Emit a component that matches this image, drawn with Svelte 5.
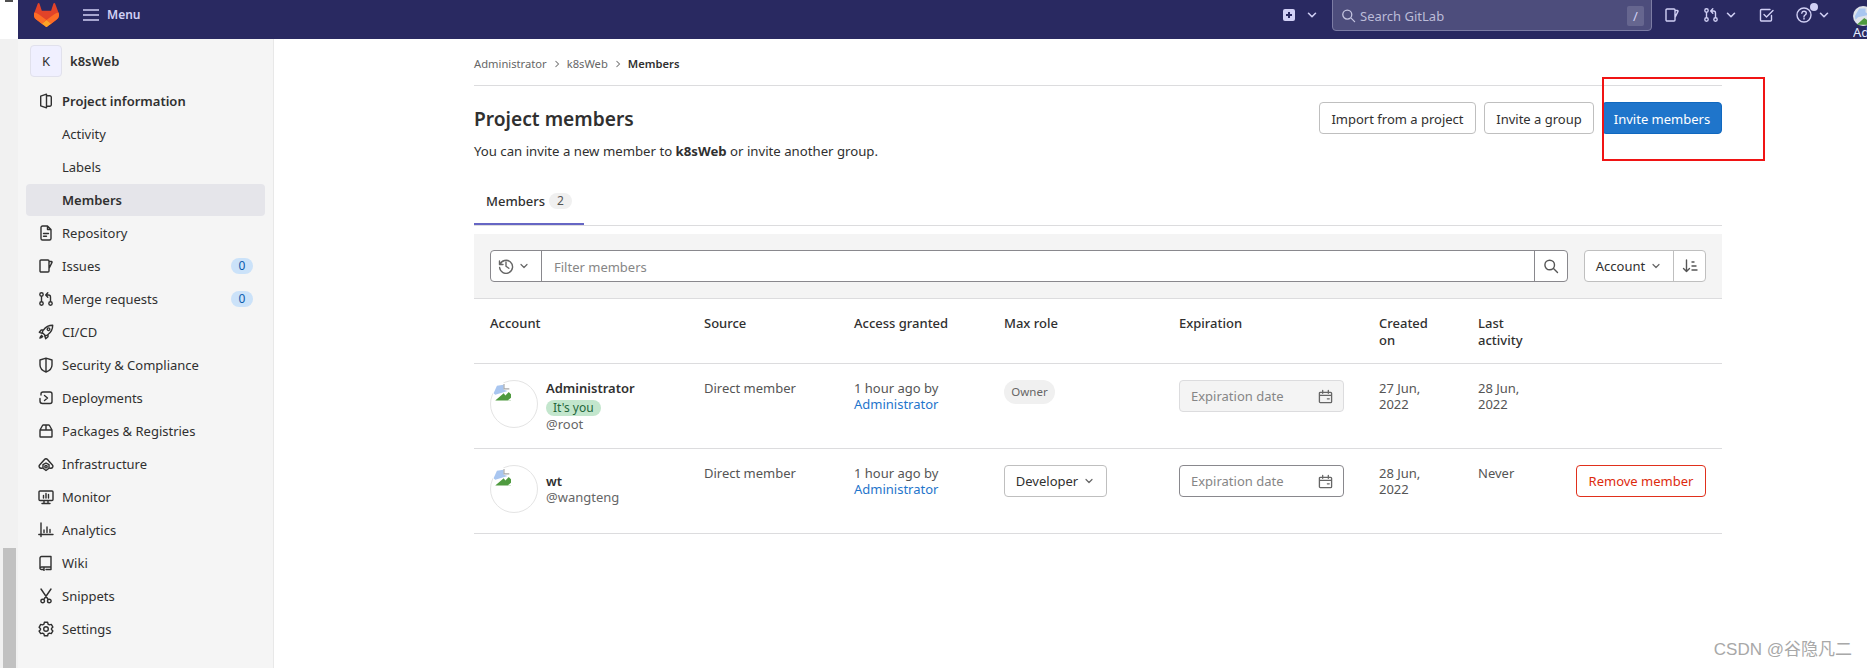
<script>
  const nav = [
    { icon: 'doc', label: 'Repository' },
    { icon: 'issues', label: 'Issues', count: 0 },
    { icon: 'mr', label: 'Merge requests', count: 0 },
    { icon: 'rocket', label: 'CI/CD' },
    { icon: 'shield', label: 'Security & Compliance' },
    { icon: 'deploy', label: 'Deployments' },
    { icon: 'package', label: 'Packages & Registries' },
    { icon: 'infra', label: 'Infrastructure' },
    { icon: 'monitor', label: 'Monitor' },
    { icon: 'analytics', label: 'Analytics' },
    { icon: 'book', label: 'Wiki' },
    { icon: 'snippet', label: 'Snippets' },
    { icon: 'gear', label: 'Settings' }
  ];
  const icons = {
    project: 'M2.7 3.2 8.5 1.2v13.6l-5.8-2zM8.5 2.7h3.3a1.5 1.5 0 0 1 1.5 1.5v7.6a1.5 1.5 0 0 1-1.5 1.5H8.5',
    doc: 'M3 2.5A1.5 1.5 0 0 1 4.5 1h5L13 4.5v9a1.5 1.5 0 0 1-1.5 1.5h-7A1.5 1.5 0 0 1 3 13.5zM9.5 1v3.5H13M5.5 8.5h5M5.5 11.2h3',
    issues: 'M3 2h7a1 1 0 0 1 1 1v10a1 1 0 0 1-1 1H3a1 1 0 0 1-1-1V3a1 1 0 0 1 1-1zM11 3.5h2.5a.6.6 0 0 1 .5.9L11 10.5',
    mr: 'M3.5 5.2v5.6M12.5 10.8V6a2 2 0 0 0-2-2H8M9.8 1.8 7.7 4l2.1 2.2M5.2 3.5a1.7 1.7 0 1 1-3.4 0 1.7 1.7 0 0 1 3.4 0zM5.2 12.5a1.7 1.7 0 1 1-3.4 0 1.7 1.7 0 0 1 3.4 0zM14.2 12.5a1.7 1.7 0 1 1-3.4 0 1.7 1.7 0 0 1 3.4 0z',
    rocket: 'M5.5 6C7.5 3.2 11 1.3 14.7 1.3 14.700 5 12.800 8.500 10 10.500c-.8.6-1.600 1-2.400 1.300L4.200 8.400c.3-.8.8-1.600 1.300-2.400zM5.500 6H3.200L1.300 8.300l2.900 1M10 10.500v2.300l-2.300 1.900-1-2.900M3.700 11.300c-.9.500-1.500 1.700-1.800 2.800 1.100-.3 2.300-.9 2.800-1.800M11.800 5.200a1.300 1.300 0 1 1-2.600 0 1.300 1.300 0 0 1 2.600 0z',
    shield: 'M8 1.200 14 3v5c0 3.300-2.700 5.800-6 7-3.300-1.200-6-3.700-6-7V3zM8 1.200V15',
    deploy: 'M3 5V4a2 2 0 0 1 2-2h7a2 2 0 0 1 2 2v7.500a2 2 0 0 1-2 2H4.500A2.500 2.500 0 0 1 2 11V8.500M6.500 5.500 9.500 8l-3 2.500',
    package: 'M2 7h12v6.500a.5.5 0 0 1-.5.500h-11a.5.5 0 0 1-.5-.500zM2 7l2.500-4.500a1 1 0 0 1 .9-.5h5.200a1 1 0 0 1 .9.5L14 7M8 2v5',
    infra: 'M4 12.300H3.200A2 2 0 0 1 1.600 9L6.500 3.500a2 2 0 0 1 3 0L14.400 9a2 2 0 0 1-1.600 3.300H12M8 7l3 1.700v3.600L8 14.500l-3-2.200V8.700zM9.200 10.700a1.200 1.200 0 1 1-2.400 0 1.200 1.200 0 0 1 2.400 0z',
    monitor: 'M2 2h12a1 1 0 0 1 1 1v7.500a1 1 0 0 1-1 1H2a1 1 0 0 1-1-1V3a1 1 0 0 1 1-1zM6 11.500v3M10 11.500v3M4 14.500h8M5.500 6.500v2.500M8 4.500V9M10.500 5.500V9',
    analytics: 'M3 1v13.500M.8 12.500H15M6 8v2.500M9 5v5.500M12 7.500v3',
    book: 'M3.500 1.500h9.500v10.500H3.500A1.500 1.500 0 0 0 2 13.500V3a1.500 1.500 0 0 1 1.500-1.500zM2 13.500A1.500 1.500 0 0 0 3.500 14.500H6M13 12v2.500H8M6 12v3.500',
    snippet: 'M3 1l7.200 10.500M13 1 5.800 11.500M6.500 13a1.800 1.800 0 1 1-3.600 0 1.800 1.800 0 0 1 3.600 0zM13.100 13a1.800 1.800 0 1 1-3.600 0 1.800 1.800 0 0 1 3.600 0z',
    gear: 'M6.400 1.300h3.200l.5 1.900 1.300.7 1.900-.5 1.600 2.700-1.400 1.400v1l1.400 1.400-1.600 2.700-1.900-.5-1.300.7-.5 1.900H6.400l-.5-1.900-1.300-.7-1.900.5L1.100 10.100l1.400-1.400v-1L1.100 6.300 2.700 3.400l1.900.5 1.300-.7zM10.300 8a2.300 2.300 0 1 1-4.600 0 2.300 2.300 0 0 1 4.600 0z',
    chevron: 'M4 6l4 4 4-4',
    search: 'M11.500 7a4.800 4.800 0 1 1-9.600 0 4.800 4.800 0 0 1 9.600 0zM10.500 10.500l4 4',
    todo: 'M12.500 8.500V13a1 1 0 0 1-1 1h-9a1 1 0 0 1-1-1V3.500a1 1 0 0 1 1-1H11M5 7.500 7.500 10 14 3.500',
    help: 'M15 8A7 7 0 1 1 1 8a7 7 0 0 1 14 0zM5.800 6.200C6 5 7 4.300 8 4.300c1.300 0 2.300.9 2.300 2 0 1.800-2.300 1.700-2.300 3.400M8 11.200v.8',
    history: 'M1.500 3v3.500H5M2 6.500A6.500 6.500 0 1 1 1.600 9.500M8 4v4.300l2.800 2',
    sort: 'M4.500 2v11.500M1.500 10.500l3 3 3-3M10 4h2M10 8h4M10 12h5',
    calendar: 'M2.500 3.500h11a1 1 0 0 1 1 1v9a1 1 0 0 1-1 1h-11a1 1 0 0 1-1-1v-9a1 1 0 0 1 1-1zM1.500 6.800h13M5 1.500v3M11 1.500v3M10 10.500h2'
  };
  const logo = [
    ['m24.507 9.5-.034-.09L21.082.562a.896.896 0 0 0-1.694.091l-2.29 7.01H7.825L5.535.653a.898.898 0 0 0-1.694-.09L.451 9.411.416 9.5a6.297 6.297 0 0 0 2.09 7.278l.012.01.03.022 5.16 3.867 2.56 1.935 1.554 1.176a1.051 1.051 0 0 0 1.268 0l1.555-1.176 2.56-1.935 5.197-3.89.014-.01A6.297 6.297 0 0 0 24.507 9.5Z', '#e24329'],
    ['m24.507 9.5-.034-.09a11.44 11.44 0 0 0-4.56 2.051l-7.447 5.632 4.742 3.584 5.197-3.89.014-.01A6.297 6.297 0 0 0 24.507 9.5Z', '#fc6d26'],
    ['m7.707 20.677 2.56 1.935 1.555 1.176a1.051 1.051 0 0 0 1.268 0l1.555-1.176 2.56-1.935-4.743-3.584-4.755 3.584Z', '#fca326'],
    ['M5.01 11.461a11.43 11.43 0 0 0-4.56-2.05L.416 9.5a6.297 6.297 0 0 0 2.09 7.278l.012.01.03.022 5.16 3.867 4.745-3.584-7.444-5.632Z', '#fc6d26']
  ];
</script>

{#snippet icon(name, cls = '')}
  <svg class="icon {cls}" viewBox="0 0 16 16" aria-hidden="true"><path d={icons[name]} /></svg>
{/snippet}

{#snippet broken()}
  <svg class="broken" viewBox="0 0 16 16" aria-hidden="true">
    <path d="M.5 9 3.500 2.500 9.500 1.500V6L13 7 2 10.500z" fill="#a9c6f0" />
    <path d="M2 15.500 9.500 9.200 11 11 14 8 16 10v5.500z" fill="#4f9a3f" />
    <path d="M13 15.500h3V13z" fill="#fff" />
    <path d="M9.800 .8v4.400H14.500" fill="none" stroke="#a8a8a8" stroke-width="1" />
  </svg>
{/snippet}

<div class="page">
  <div class="strip">
    <div class="strip-top"><span class="arrow"></span></div>
    <div class="track"><div class="thumb"></div></div>
  </div>

  <div class="shell">
    <header class="topbar">
      <svg class="logo" viewBox="0 0 25 24" aria-label="GitLab">
        {#each logo as [d, fill]}<path {d} {fill} />{/each}
      </svg>
      <div class="menu">
        <svg class="burger" viewBox="0 0 16 12" aria-hidden="true"><path d="M0 1h16M0 6h16M0 11h16" /></svg>
        <span>Menu</span>
      </div>
      <div class="top-right">
        <span class="plus"><svg viewBox="0 0 12 12" aria-hidden="true"><path d="M6 3v6M3 6h6" /></svg></span>
        {@render icon('chevron', 'top-chev first')}
        <div class="search">
          {@render icon('search', 'search-ic')}
          <span class="search-text">Search GitLab</span>
          <kbd>/</kbd>
        </div>
        {@render icon('issues', 'top-ic t-issues')}
        {@render icon('mr', 'top-ic t-mr')}
        {@render icon('chevron', 'top-chev t-chev')}
        {@render icon('todo', 'top-ic t-todo')}
        <span class="help">
          {@render icon('help', 'top-ic')}
          <i class="dot"></i>
        </span>
        {@render icon('chevron', 'top-chev t-chev')}
        <div class="me">
          <svg viewBox="0 0 16 16" aria-hidden="true">
            <circle cx="8" cy="8" r="8" fill="#dfe3ea" />
            <path d="M1.500 8 5 2h5v3l3 2-9 2-2 2z" fill="#a9c6f0" />
            <path d="M3 15 9 9.500 11 11 13 9l2 3-2 3z" fill="#4f9a3f" />
          </svg>
          <span>Ad</span>
        </div>
      </div>
    </header>

    <div class="below">
      <aside class="sidebar">
        <div class="proj">
          <span class="proj-avatar">K</span>
          <strong>k8sWeb</strong>
        </div>
        <div class="item head">{@render icon('project')}<span>Project information</span></div>
        <div class="item sub">Activity</div>
        <div class="item sub">Labels</div>
        <div class="item sub active">Members</div>
        {#each nav as n}
          <div class="item">
            {@render icon(n.icon)}
            <span>{n.label}</span>
            {#if n.count !== undefined}<em class="count">{n.count}</em>{/if}
          </div>
        {/each}
      </aside>

      <main class="main">
        <nav class="crumbs">
          <span>Administrator</span>
          <svg class="sep" viewBox="0 0 16 16" aria-hidden="true"><path d="M6 4l4 4-4 4" /></svg>
          <span>k8sWeb</span>
          <svg class="sep" viewBox="0 0 16 16" aria-hidden="true"><path d="M6 4l4 4-4 4" /></svg>
          <b>Members</b>
        </nav>

        <div class="title-row">
          <div>
            <h1>Project members</h1>
            <p>You can invite a new member to <strong>k8sWeb</strong> or invite another group.</p>
          </div>
          <div class="actions">
            <button class="btn w-import">Import from a project</button>
            <button class="btn w-group">Invite a group</button>
            <button class="btn primary">Invite members</button>
            <div class="red-box"></div>
          </div>
        </div>

        <div class="tabs">
          <div class="tab">Members <span class="pill">2</span></div>
        </div>

        <div class="filter">
          <div class="search-box">
            <div class="hist">{@render icon('history', 'hist-ic')}{@render icon('chevron', 'mini')}</div>
            <div class="filter-input">Filter members</div>
            <div class="go">{@render icon('search', 'go-ic')}</div>
          </div>
          <div class="sorter">
            <div class="sort-by">Account {@render icon('chevron', 'mini')}</div>
            <div class="sort-dir">{@render icon('sort', 'sort-ic')}</div>
          </div>
        </div>

        <div class="row thead">
          <div>Account</div>
          <div>Source</div>
          <div>Access granted</div>
          <div>Max role</div>
          <div>Expiration</div>
          <div>Created on</div>
          <div>Last activity</div>
          <div></div>
        </div>

        <div class="row">
          <div class="user">
            <div class="avatar">{@render broken()}</div>
            <div class="who">
              <b>Administrator</b>
              <span class="you">It's you</span>
              <span class="handle">@root</span>
            </div>
          </div>
          <div>Direct member</div>
          <div>1 hour ago by<br /><a href="#top">Administrator</a></div>
          <div><span class="owner">Owner</span></div>
          <div><div class="date disabled"><span>Expiration date</span>{@render icon('calendar', 'cal')}</div></div>
          <div>27 Jun, 2022</div>
          <div>28 Jun, 2022</div>
          <div></div>
        </div>

        <div class="row">
          <div class="user">
            <div class="avatar">{@render broken()}</div>
            <div class="who">
              <b>wt</b>
              <span class="handle">@wangteng</span>
            </div>
          </div>
          <div>Direct member</div>
          <div>1 hour ago by<br /><a href="#top">Administrator</a></div>
          <div><div class="role">Developer {@render icon('chevron', 'mini')}</div></div>
          <div><div class="date"><span>Expiration date</span>{@render icon('calendar', 'cal')}</div></div>
          <div>28 Jun, 2022</div>
          <div>Never</div>
          <div class="act"><button class="btn danger">Remove member</button></div>
        </div>
      </main>
    </div>
  </div>
  <div class="mark">CSDN @谷隐凡二</div>
</div>

<style>
  :global(body) {
    margin: 0;
    background: #fff;
  }
  .page {
    display: flex;
    width: 1867px;
    height: 668px;
    overflow: hidden;
    position: relative;
    font: 13px/16px "Noto Sans", "Noto Sans CJK SC", sans-serif;
    color: #303030;
  }
  .strip {
    width: 18px;
    flex: none;
    display: flex;
    flex-direction: column;
  }
  .strip-top {
    height: 39px;
    background: #fff;
    display: flex;
    justify-content: center;
  }
  .arrow {
    width: 8px;
    height: 2px;
    background: #505050;
  }
  .track {
    flex: 1;
    background: #f1f1f1;
    display: flex;
    flex-direction: column;
    justify-content: flex-end;
    padding: 0 2px 0 3px;
  }
  .thumb {
    height: 120px;
    background: #c1c1c1;
  }
  .shell {
    flex: 1;
    min-width: 0;
    display: flex;
    flex-direction: column;
  }
  .icon {
    width: 16px;
    height: 16px;
    flex: none;
    fill: none;
    stroke: currentColor;
    stroke-width: 1.4;
    stroke-linecap: round;
    stroke-linejoin: round;
  }

  /* top bar */
  .topbar {
    height: 39px;
    flex: none;
    background: #292961;
    display: flex;
    align-items: center;
    color: #d1d0f5;
    overflow: hidden;
  }
  .logo {
    width: 25px;
    height: 24px;
    margin: -9px 0 0 16px;
    flex: none;
  }
  .menu {
    display: flex;
    align-items: center;
    gap: 8px;
    margin: -9px 0 0 24px;
    font-size: 12px;
    font-weight: 600;
  }
  .burger {
    width: 16px;
    height: 12px;
    fill: none;
    stroke: #d1d0f5;
    stroke-width: 1.5;
  }
  .top-right {
    margin-left: auto;
    display: flex;
    align-items: center;
    height: 100%;
  }
  .plus {
    width: 12px;
    height: 12px;
    background: #d1d0f5;
    border-radius: 2px;
    display: flex;
    margin-top: -9px;
  }
  .plus svg {
    width: 12px;
    height: 12px;
    fill: none;
    stroke: #292961;
    stroke-width: 2;
  }
  .top-chev {
    width: 14px;
    height: 14px;
    margin-top: -9px;
    stroke-width: 1.8;
  }
  .top-chev.first {
    margin-left: 10px;
    margin-right: 13px;
  }
  .t-chev {
    margin-left: 5px;
  }
  .search {
    width: 320px;
    height: 36px;
    align-self: flex-end;
    margin-bottom: 8px;
    box-sizing: border-box;
    background: #4d4d7c;
    border: 1px solid #7c7ca4;
    border-radius: 4px;
    display: flex;
    align-items: center;
    padding: 5px 7px 0 8px;
    color: #c4c4e0;
  }
  .search-ic {
    width: 15px;
    height: 15px;
    margin-right: 4px;
  }
  .search-text {
    flex: 1;
    font-size: 13px;
    color: #bcbcd8;
  }
  kbd {
    font: inherit;
    width: 17px;
    height: 20px;
    background: #66668f;
    border-radius: 2px;
    text-align: center;
    line-height: 20px;
    color: #d1d0f5;
  }
  .top-ic {
    width: 16px;
    height: 16px;
    margin-top: -9px;
  }
  .t-issues {
    margin-left: 12px;
  }
  .t-mr {
    margin-left: 23px;
  }
  .t-todo {
    margin-left: 21px;
    margin-right: 21px;
  }
  .help {
    display: flex;
    position: relative;
  }
  .dot {
    position: absolute;
    left: 14px;
    top: -13px;
    width: 8px;
    height: 8px;
    border-radius: 50%;
    background: #d1d0f5;
  }
  .me {
    margin-left: 22px;
    width: 14px;
    overflow: hidden;
    flex: none;
    align-self: flex-start;
    padding-top: 6px;
    color: #e6ecff;
    font-size: 13px;
    line-height: 13px;
  }
  .me svg {
    display: block;
    width: 20px;
    height: 20px;
  }

  /* sidebar */
  .below {
    flex: 1;
    display: flex;
    min-height: 0;
  }
  .sidebar {
    width: 255px;
    flex: none;
    background: #f5f5f5;
    border-right: 1px solid #e8e8e8;
    padding: 6px 0 0;
  }
  .proj {
    display: flex;
    align-items: center;
    gap: 8px;
    margin: 0 0 8px 12px;
  }
  .proj strong {
    font-weight: 600;
  }
  .proj-avatar {
    width: 30px;
    height: 30px;
    border: 1px solid #e1e1ec;
    border-radius: 4px;
    background: #f0f0ff;
    display: flex;
    align-items: center;
    justify-content: center;
  }
  .item {
    height: 32px;
    margin: 0 8px 1px;
    border-radius: 4px;
    display: flex;
    align-items: center;
    gap: 8px;
    padding: 0 12px;
  }
  .item > span {
    flex: 1;
  }
  .head {
    font-weight: 600;
  }
  .sub {
    padding-left: 36px;
  }
  .active {
    background: #e5e5ea;
    font-weight: 600;
  }
  .count {
    font-style: normal;
    width: 22px;
    height: 16px;
    border-radius: 8px;
    background: #cbe2f9;
    color: #0b5cad;
    font-size: 12px;
    line-height: 16px;
    text-align: center;
  }

  /* main */
  .main {
    width: 1248px;
    margin-left: 200px;
    flex: none;
  }
  .crumbs {
    height: 47px;
    box-sizing: border-box;
    border-bottom: 1px solid #dcdcde;
    padding-top: 4px;
    display: flex;
    align-items: center;
    font-size: 11.2px;
    color: #666;
  }
  .crumbs b {
    font-weight: 600;
    color: #303030;
  }
  .sep {
    width: 12px;
    height: 12px;
    margin: 0 4px;
    fill: none;
    stroke: #777;
    stroke-width: 1.4;
  }
  .title-row {
    display: flex;
    justify-content: space-between;
    padding-top: 16px;
    height: 106px;
    box-sizing: border-box;
  }
  h1 {
    margin: 1px 0 0;
    font-size: 19.2px;
    line-height: 32px;
    font-weight: 600;
  }
  .title-row p {
    margin: 8px 0 0;
    line-height: 16px;
    font-size: 13.2px;
  }
  .title-row p strong {
    font-weight: 700;
  }
  .actions {
    display: flex;
    gap: 8px;
    position: relative;
    align-items: flex-start;
  }
  .btn {
    height: 32px;
    box-sizing: border-box;
    padding: 1px 0 0;
    background: #fff;
    border: 1px solid #bfbfbf;
    border-radius: 4px;
    font: inherit;
    color: #303030;
  }
  .w-import {
    width: 157px;
  }
  .w-group {
    width: 110px;
  }
  .primary {
    width: 120px;
    background: #1f75cb;
    border-color: #1068bf;
    color: #fff;
  }
  .red-box {
    position: absolute;
    left: 283px;
    top: -25px;
    width: 163px;
    height: 84px;
    box-sizing: border-box;
    border: 2px solid #f01414;
  }
  .danger {
    border-color: #e0301c;
    color: #dd2b0e;
    padding: 0;
    width: 130px;
  }
  .tabs {
    height: 33px;
    border-bottom: 1px solid #dcdcde;
    display: flex;
  }
  .tab {
    width: 110px;
    height: 33px;
    box-sizing: border-box;
    border-bottom: 2px solid #6666c4;
    padding: 1px 0 0 12px;
    font-weight: 500;
    display: flex;
    gap: 4px;
    align-items: flex-start;
  }
  .pill {
    width: 23px;
    height: 16px;
    border-radius: 8px;
    background: #f0f0f0;
    color: #555;
    font-size: 12px;
    text-align: center;
    font-weight: 400;
  }
  .filter {
    margin-top: 8px;
    height: 65px;
    box-sizing: border-box;
    background: #f4f4f4;
    border-bottom: 1px solid #dcdcde;
    padding: 16px;
    display: flex;
    justify-content: space-between;
  }
  .search-box {
    width: 1078px;
    height: 32px;
    box-sizing: border-box;
    border: 1px solid #89888d;
    border-radius: 4px;
    background: #fff;
    display: flex;
    align-items: stretch;
    color: #666;
  }
  .hist {
    width: 51px;
    flex: none;
    border-right: 1px solid #89888d;
    display: flex;
    align-items: center;
    padding-left: 7px;
    gap: 4px;
    box-sizing: border-box;
  }
  .mini {
    width: 12px;
    height: 12px;
    stroke-width: 1.6;
    color: #666;
  }
  .filter-input {
    flex: 1;
    display: flex;
    align-items: center;
    padding: 1px 0 0 12px;
    color: #868686;
  }
  .go {
    width: 32px;
    border-left: 1px solid #89888d;
    display: flex;
    align-items: center;
    justify-content: center;
    color: #555;
  }
  .sorter {
    width: 122px;
    height: 32px;
    box-sizing: border-box;
    border: 1px solid #bfbfbf;
    border-radius: 4px;
    background: #fff;
    display: flex;
  }
  .sort-by {
    flex: 1;
    display: flex;
    align-items: center;
    justify-content: center;
    gap: 5px;
    border-right: 1px solid #bfbfbf;
  }
  .sort-dir {
    width: 31px;
    display: flex;
    align-items: center;
    justify-content: center;
    color: #555;
  }
  .row {
    display: grid;
    grid-template-columns: 214px 150px 150px 175px 200px 99px 99px 1fr;
    height: 85px;
    box-sizing: border-box;
    border-bottom: 1px solid #dcdcde;
    color: #555;
  }
  .row > div {
    padding: 16px 16px 0;
    min-width: 0;
  }
  .thead {
    height: 65px;
    color: #303030;
    line-height: 17px;
    font-weight: 500;
  }
  .user {
    display: flex;
    gap: 8px;
    align-items: flex-start;
  }
  .avatar {
    width: 48px;
    height: 48px;
    flex: none;
    box-sizing: border-box;
    border: 1px solid #e4e4e4;
    border-radius: 50%;
    position: relative;
  }
  .broken {
    position: absolute;
    left: 2px;
    top: 2px;
    width: 18px;
    height: 18px;
    background: #fff;
  }
  .who {
    display: flex;
    flex-direction: column;
    align-items: flex-start;
    justify-content: center;
    min-height: 48px;
  }
  .who b {
    font-weight: 600;
    color: #303030;
  }
  .you {
    height: 16px;
    margin-top: 4px;
    padding: 0 7px;
    border-radius: 8px;
    background: #c3e6cd;
    color: #24663b;
    font-size: 12px;
  }
  .handle {
    color: #666;
  }
  a {
    color: #1f75cb;
    text-decoration: none;
  }
  .owner {
    display: block;
    width: 51px;
    height: 24px;
    border-radius: 12px;
    background: #f0f0f0;
    color: #666;
    font-size: 11.5px;
    line-height: 24px;
    text-align: center;
  }
  .date {
    width: 165px;
    height: 32px;
    box-sizing: border-box;
    border: 1px solid #89888d;
    border-radius: 4px;
    display: flex;
    align-items: center;
    justify-content: space-between;
    padding: 0 10px 0 11px;
    color: #868686;
  }
  .disabled {
    background: #f4f4f4;
    border-color: #dcdcde;
  }
  .cal {
    width: 15px;
    height: 15px;
    color: #666;
  }
  .role {
    width: 103px;
    height: 32px;
    box-sizing: border-box;
    border: 1px solid #bfbfbf;
    border-radius: 4px;
    display: flex;
    align-items: center;
    justify-content: center;
    gap: 5px;
    color: #303030;
  }
  .row > .act {
    padding-left: 0;
    display: flex;
    justify-content: flex-end;
    align-items: flex-start;
  }
  .mark {
    position: absolute;
    right: 15px;
    bottom: 8px;
    color: #a8a8a8;
    font: 17px/20px "Liberation Sans", "Noto Sans CJK SC", sans-serif;
    white-space: nowrap;
  }
</style>
